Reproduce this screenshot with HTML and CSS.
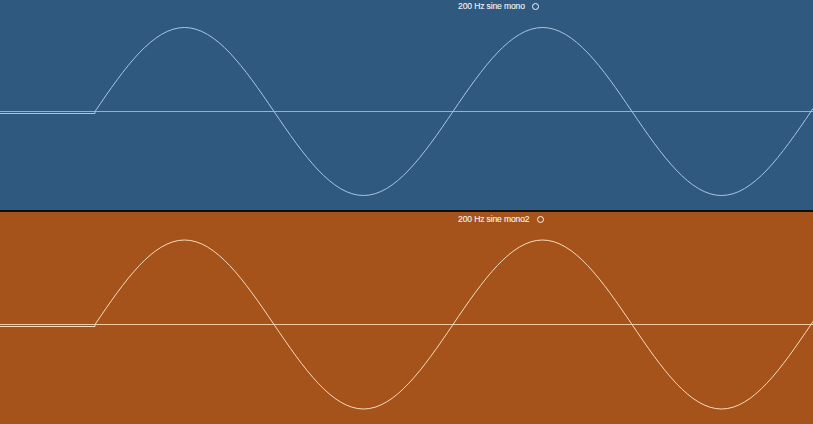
FILE: index.html
```html
<!DOCTYPE html>
<html>
<head>
<meta charset="utf-8">
<link rel="stylesheet" href="styles.css">
</head>
<body>
<div class="tracks">
  <section class="track track-blue">
    <div class="track-label"><span class="name">200 Hz sine mono</span><span class="dot"></span></div>
    <svg class="wave" viewBox="0 0 813 210" preserveAspectRatio="none">
      <line class="axis" x1="0" y1="111.5" x2="813" y2="111.5"/>
      <path class="sig" d="M0,113.5 H95 L95,111.5 c29.9,-44.1 58.1,-84 89.5,-84 c31.4,0 59.6,39.9 89.5,84 c29.9,44.1 58.1,84 89.5,84 c31.4,0 59.6,-39.9 89.5,-84 c29.9,-44.1 58.1,-84 89.5,-84 c31.4,0 59.6,39.9 89.5,84 c29.9,44.1 58.1,84 89.5,84 c31.4,0 59.6,-39.9 89.5,-84 c29.9,-44.1 58.1,-84 89.5,-84"/>
    </svg>
  </section>
  <div class="divider"></div>
  <section class="track track-orange">
    <div class="track-label"><span class="name">200 Hz sine mono2</span><span class="dot"></span></div>
    <svg class="wave" viewBox="0 0 813 212" preserveAspectRatio="none">
      <line class="axis" x1="0" y1="112.5" x2="813" y2="112.5"/>
      <path class="sig" d="M0,114.5 H95 L95,112.5 c29.9,-44.1 58.1,-84.5 89.5,-84.5 c31.4,0 59.6,40.4 89.5,84.5 c29.9,44.1 58.1,84.5 89.5,84.5 c31.4,0 59.6,-40.4 89.5,-84.5 c29.9,-44.1 58.1,-84.5 89.5,-84.5 c31.4,0 59.6,40.4 89.5,84.5 c29.9,44.1 58.1,84.5 89.5,84.5 c31.4,0 59.6,-40.4 89.5,-84.5 c29.9,-44.1 58.1,-84.5 89.5,-84.5"/>
    </svg>
  </section>
</div>
</body>
</html>
```
FILE: styles.css
```css
html, body {
  margin: 0;
  padding: 0;
  width: 813px;
  height: 424px;
  overflow: hidden;
  background: #111;
  font-family: "Liberation Sans", Arial, sans-serif;
}
.tracks {
  display: flex;
  flex-direction: column;
  width: 813px;
  height: 424px;
}
.track {
  position: relative;
  overflow: hidden;
}
.track-blue {
  height: 210px;
  background: #30597f;
}
.track-orange {
  height: 212px;
  background: #a5531a;
}
.divider {
  height: 2px;
  background: #0d0d0d;
}
.wave {
  display: block;
  width: 813px;
  height: 100%;
}
.track-label {
  position: absolute;
  left: 458px;
  top: 1px;
  display: flex;
  align-items: center;
  gap: 7px;
  font-size: 8.6px;
  letter-spacing: -0.15px;
  line-height: 11px;
  color: #f2f4f7;
  -webkit-text-stroke: 0.1px #f2f4f7;
}
.track-orange .track-label {
  top: 2px;
}
.dot {
  width: 5px;
  height: 5px;
  border: 1px solid #f2f4f7;
  border-radius: 50%;
}
.axis {
  stroke-width: 1;
}
.sig {
  fill: none;
  stroke-width: 1;
}
.track-blue .axis { stroke: #93b0cd; }
.track-blue .sig { stroke: #a9c6e4; }
.track-orange .axis { stroke: #f0c9a2; }
.track-orange .sig { stroke: #f7dcc0; }
```
